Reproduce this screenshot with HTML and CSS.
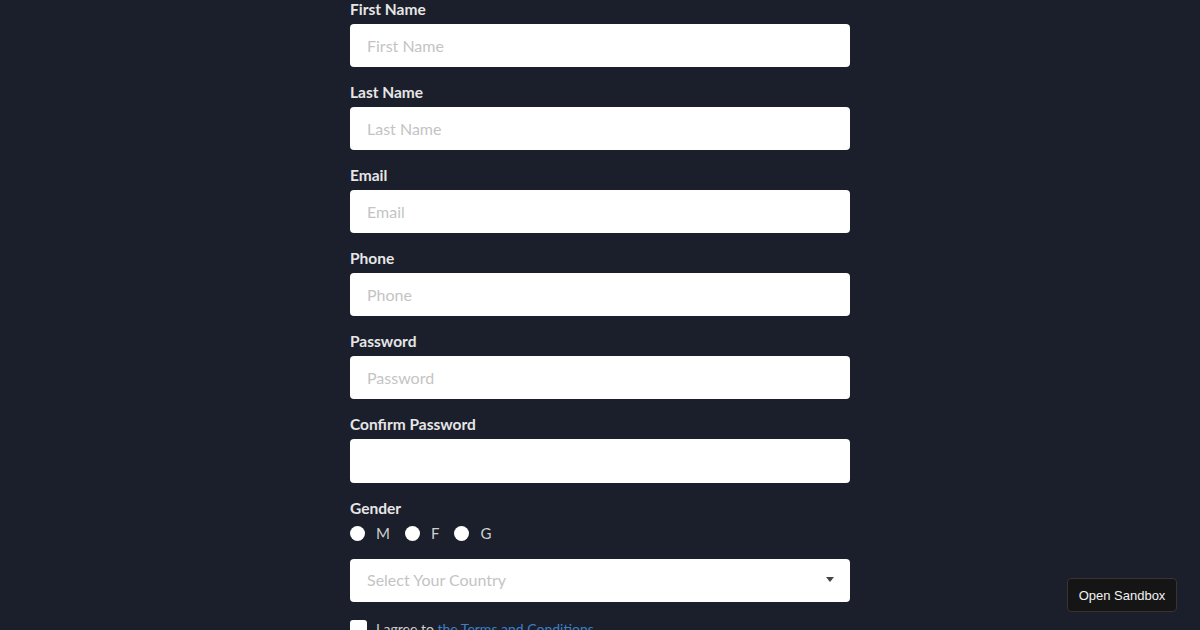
FILE: index.html
```html
<!DOCTYPE html>
<html>
<head>
<meta charset="utf-8">
<link rel="stylesheet" href="styles.css">
</head>
<body>
<form class="form">
  <div class="field">
    <label class="label">First Name</label>
    <input class="input" type="text" placeholder="First Name">
  </div>
  <div class="field">
    <label class="label">Last Name</label>
    <input class="input" type="text" placeholder="Last Name">
  </div>
  <div class="field">
    <label class="label">Email</label>
    <input class="input" type="text" placeholder="Email">
  </div>
  <div class="field">
    <label class="label">Phone</label>
    <input class="input" type="text" placeholder="Phone">
  </div>
  <div class="field">
    <label class="label">Password</label>
    <input class="input" type="password" placeholder="Password">
  </div>
  <div class="field">
    <label class="label">Confirm Password</label>
    <input class="input input-tall" type="password">
  </div>
  <div class="field">
    <label class="label">Gender</label>
    <div class="radios">
      <label class="radio-item"><input class="radio" type="radio" name="g"><span>M</span></label>
      <label class="radio-item"><input class="radio" type="radio" name="g"><span>F</span></label>
      <label class="radio-item"><input class="radio" type="radio" name="g"><span>G</span></label>
    </div>
  </div>
  <div class="field">
    <div class="select">
      <span class="select-text">Select Your Country</span>
      <span class="caret"></span>
    </div>
  </div>
  <div class="field">
    <label class="check-row"><input class="check" type="checkbox"><span>I agree to <a class="link" href="#">the Terms and Conditions</a></span></label>
  </div>
</form>
<button class="sandbox" type="button">Open Sandbox</button>
</body>
</html>
```

FILE: styles.css
```css
* { box-sizing: border-box; }
html, body { margin: 0; padding: 0; }
body {
  background: #1b1f2b;
  font-family: Lato, "Open Sans", sans-serif;
  height: 630px;
  overflow: hidden;
}
.form {
  width: 500px;
  margin: 0 auto;
  display: flex;
  flex-direction: column;
  gap: 16px;
}
.field {
  display: flex;
  flex-direction: column;
  gap: 6px;
}
.label {
  display: block;
  font-size: 15.5px;
  line-height: 18px;
  font-weight: 700;
  color: #e6e6e6;
}
.input {
  display: block;
  width: 100%;
  height: 43px;
  border: none;
  border-radius: 4px;
  background: #fff;
  padding: 0 17px;
  font-family: Lato, sans-serif;
  font-size: 16px;
  color: #333;
  outline: none;
}
.input-tall { height: 44px; }
.input::placeholder { color: #c4c4c4; }
.radios {
  display: flex;
  align-items: center;
  height: 20px;
  gap: 15px;
}
.radio-item {
  display: flex;
  align-items: center;
  gap: 11px;
  color: #cfcfcf;
  font-size: 15px;
}
.radio {
  -webkit-appearance: none;
  appearance: none;
  margin: 0;
  width: 15px;
  height: 15px;
  border-radius: 50%;
  background: #fff;
  border: none;
}
.select {
  height: 43px;
  background: #fff;
  border-radius: 4px;
  padding: 0 16px 0 17px;
  display: flex;
  align-items: center;
  justify-content: space-between;
}
.select-text {
  font-size: 16px;
  line-height: 20px;
  padding-bottom: 1px;
  color: #c4c4c4;
}
.caret {
  width: 0;
  height: 0;
  margin-bottom: 2px;
  border-left: 4.5px solid transparent;
  border-right: 4.5px solid transparent;
  border-top: 5px solid #444;
}
.check-row {
  display: flex;
  align-items: center;
  gap: 9px;
  padding-top: 2px;
  color: #cfcfcf;
  font-size: 14px;
}
.check {
  -webkit-appearance: none;
  appearance: none;
  margin: 0;
  width: 17px;
  height: 17px;
  border-radius: 3px;
  background: #fff;
}
.link {
  color: #3b7fc4;
  text-decoration: none;
}
.sandbox {
  position: fixed;
  right: 23px;
  bottom: 18px;
  width: 110px;
  height: 34px;
  background: #151515;
  border: 1px solid #3a3330;
  border-radius: 4px;
  color: #f2f2f2;
  font-family: "Liberation Sans", Arial, sans-serif;
  font-size: 13px;
  padding: 0;
}
```
